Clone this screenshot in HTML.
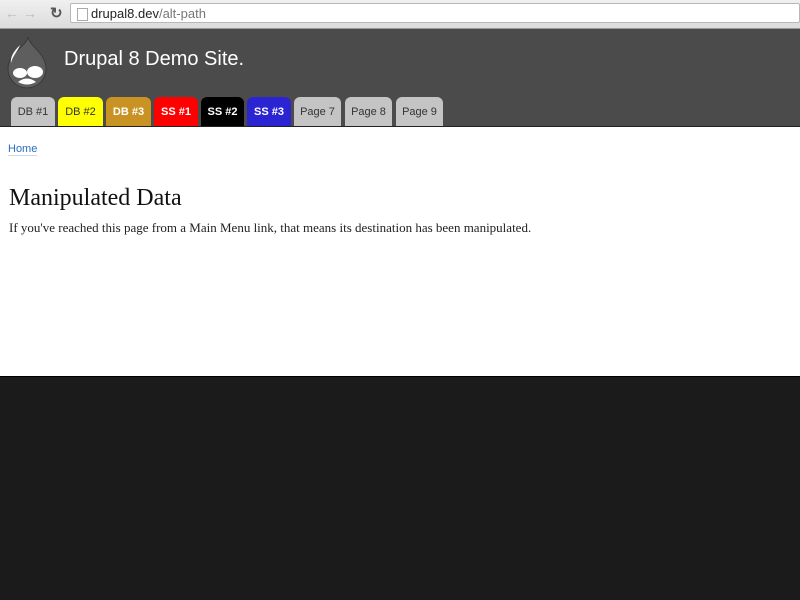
<!DOCTYPE html>
<html><head><style>
body{margin:0;width:800px;height:600px;overflow:hidden;background:#1b1b1b;font-family:"Liberation Sans",sans-serif;position:relative}
.chrome{position:absolute;left:0;top:0;width:800px;height:28px;background:linear-gradient(#f0f0f0,#dcdcdc);border-bottom:1px solid #999}
.url{position:absolute;left:70px;top:3px;width:730px;height:20px;background:#fff;border:1px solid #b8b8b8;border-radius:2px;font-size:13px;line-height:20px;color:#222;box-sizing:border-box;padding-left:20px}
.hdr{position:absolute;left:0;top:29px;width:800px;height:97px;background:#4b4b4b;border-bottom:1px solid #222}
.title{position:absolute;left:64px;top:19px;color:#fff;font-size:20px}
.tab{position:absolute;top:68px;height:29px;border-radius:6px 6px 0 0;font-size:11px;line-height:30px;text-align:center;color:#333;background:#c4c4c4}
.b{font-weight:bold;color:#fff}
.main{position:absolute;left:0;top:127px;width:800px;height:249px;background:#fff;border-bottom:1px solid #000}
</style></head><body>
<div class="chrome">
<span style="position:absolute;left:5px;top:5px;color:#bbb;font-size:14px">&#8592; &#8594;</span>
<span style="position:absolute;left:50px;top:4px;color:#555;font-size:15px;font-weight:bold">&#8635;</span>
<div class="url"><span style="position:absolute;left:6px;top:4px;width:9px;height:11px;border:1px solid #aaa"></span>drupal8.dev<span style="color:#777">/alt-path</span></div>
</div>
<div class="hdr">
<svg style="position:absolute;left:4px;top:6px" width="46" height="54" viewBox="0 0 46 54">
<path d="M24 2 C22 12 4 18 4 34 A19 19 0 0 0 42 34 C42 18 26 12 24 2Z" fill="#5e5e5e" stroke="#3a3a3a"/>
<path d="M16 10 C10 16 6 22 7 28 C9 20 14 16 16 10Z" fill="#fff"/>
<ellipse cx="16" cy="38" rx="7" ry="5" fill="#fff"/><ellipse cx="31" cy="37" rx="8" ry="6" fill="#fff"/>
<path d="M14 47 Q23 40 32 47 Q23 52 14 47Z" fill="#fff"/>
</svg>
<div class="title">Drupal 8 Demo Site.</div>
<div class="tab" style="left:11px;width:44px">DB #1</div>
<div class="tab" style="left:58px;width:45px;background:#ff0">DB #2</div>
<div class="tab b" style="left:106px;width:45px;background:#c89323">DB #3</div>
<div class="tab b" style="left:154px;width:44px;background:#f00">SS #1</div>
<div class="tab b" style="left:201px;width:43px;background:#000">SS #2</div>
<div class="tab b" style="left:247px;width:44px;background:#2b24d3">SS #3</div>
<div class="tab" style="left:294px;width:47px">Page 7</div>
<div class="tab" style="left:345px;width:47px">Page 8</div>
<div class="tab" style="left:396px;width:47px">Page 9</div>
</div>
<div class="main">
<a style="position:absolute;left:8px;top:16px;font-size:11px;color:#2a6fc0;text-decoration:none;border-bottom:1px solid #c8d8ee">Home</a>
<div style="position:absolute;left:9px;top:58px;font-family:'Liberation Serif',serif;font-size:24px;color:#111">Manipulated Data</div>
<div style="position:absolute;left:9px;top:93px;font-family:'Liberation Serif',serif;font-size:13px;color:#222">If you've reached this page from a Main Menu link, that means its destination has been manipulated.</div>
</div>
</body></html>
